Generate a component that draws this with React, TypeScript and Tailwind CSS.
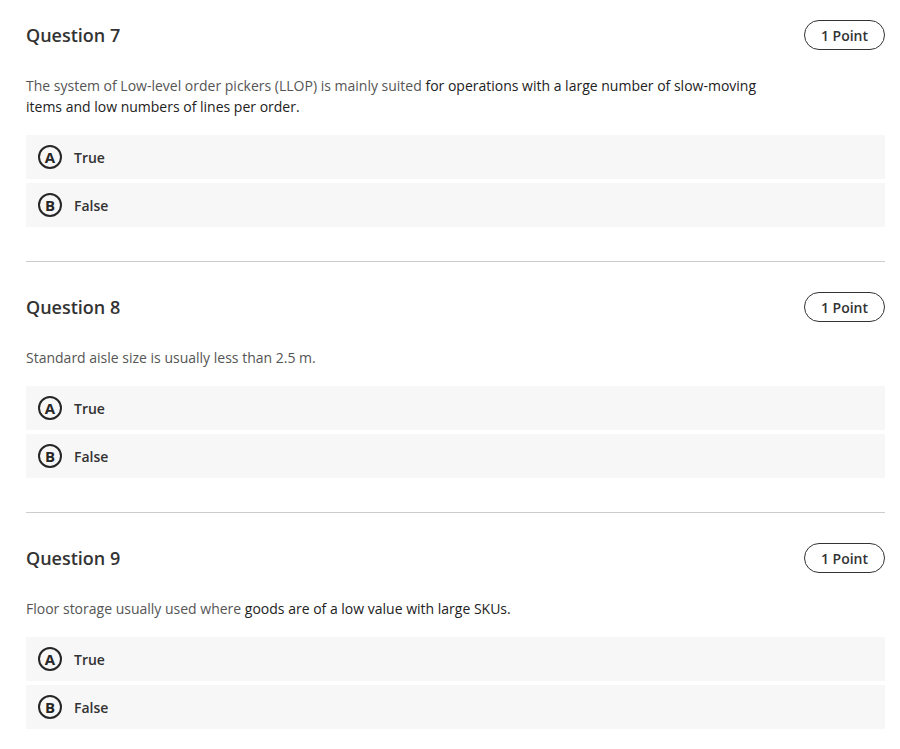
import React from "react";

type Q = {
  n: number;
  light: string;
  dark: string;
};

const questions: Q[] = [
  {
    n: 7,
    light: "The system of Low-level order pickers (LLOP) is mainly suited ",
    dark: "for operations with a large number of slow-moving items and low numbers of lines per order.",
  },
  { n: 8, light: "Standard aisle size is usually less than 2.5 m.", dark: "" },
  {
    n: 9,
    light: "Floor storage usually used where ",
    dark: "goods are of a low value with large SKUs.",
  },
];

function Option({ letter, label }: { letter: string; label: string }) {
  return (
    <div className="flex h-[44px] items-center bg-[#f7f7f7] pl-[12px]">
      <div className="box-border flex h-[24px] w-[24px] shrink-0 items-center justify-center rounded-full border-2 border-[#262626] text-[15px] font-bold leading-none text-[#262626]">
        {letter}
      </div>
      <span className="ml-[12px] text-[14px] font-semibold text-[#333]">{label}</span>
    </div>
  );
}

function Question({ q }: { q: Q }) {
  return (
    <div>
      <div className="flex h-[30px] items-center justify-between">
        <h2 className="text-[18px] font-semibold leading-[24px] text-[#333]">Question {q.n}</h2>
        <div className="flex h-[30px] w-[81px] shrink-0 items-center justify-center rounded-full border border-[#333] text-[14px] font-semibold text-[#333]">
          1 Point
        </div>
      </div>
      <p className="mt-[25px] max-w-[745px] text-[14px] leading-[21px] text-[#555]">
        {q.light}
        {q.dark && <span className="text-[#222]">{q.dark}</span>}
      </p>
      <div className="mt-[18px] flex flex-col gap-[4px]">
        <Option letter="A" label="True" />
        <Option letter="B" label="False" />
      </div>
    </div>
  );
}

export default function App() {
  return (
    <div
      className="min-h-[749px] bg-white pl-[26px] pr-[15px] pt-[20px]"
      style={{ fontFamily: '"Open Sans", "Liberation Sans", sans-serif' }}
    >
      {questions.map((q, i) => (
        <div key={q.n}>
          {i > 0 && <div className="mb-[30px] mt-[34px] h-px bg-[#cccccc]" />}
          <Question q={q} />
        </div>
      ))}
    </div>
  );
}
